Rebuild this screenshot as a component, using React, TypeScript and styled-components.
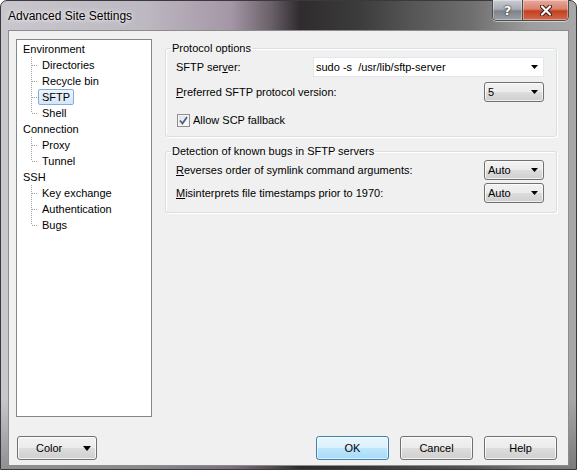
import styled, { createGlobalStyle, css } from 'styled-components';

const Global = createGlobalStyle`
  html, body {
    margin: 0;
    padding: 0;
    background: #ffffff;
  }
  body {
    font-family: "Liberation Sans", Arial, sans-serif;
    font-size: 11px;
    color: #000;
  }
`;

const Window = styled.div`
  width: 577px;
  height: 470px;
  box-sizing: border-box;
  display: flex;
  flex-direction: column;
  border: 1px solid #3a3a3a;
  border-radius: 7px 7px 0 0;
  background:
    linear-gradient(180deg, rgba(255,255,255,0) 85%, rgba(40,40,40,0.35) 100%),
    linear-gradient(90deg, #c9c6cd 0%, #bdb8c1 25%, #a496a6 40%, #6a6068 47%, #2f2c2e 52%, #3c3b3c 62%, #575757 72%, #6f6f70 82%, #9d9d9d 92%, #a8a8a8 100%);
`;

const TitleBar = styled.div`
  height: 29px;
  display: flex;
  align-items: flex-start;
  padding-left: 7px;
`;

const TitleText = styled.div`
  margin-top: 8px;
  font-size: 12px;
  line-height: 14px;
  color: #000;
  text-shadow: 0 0 6px rgba(255, 255, 255, 0.9), 0 0 3px rgba(255, 255, 255, 0.9);
`;

const CaptionGroup = styled.div`
  margin-left: auto;
  margin-right: 7px;
  margin-top: -1px;
  display: flex;
  height: 20px;
  border: 1px solid #4b4b4b;
  border-top: none;
  border-radius: 0 0 5px 5px;
  overflow: hidden;
  box-shadow: 0 1px 0 rgba(255, 255, 255, 0.5);
`;

const CaptionButton = styled.div<{ $close?: boolean }>`
  width: ${p => (p.$close ? 45 : 29)}px;
  display: flex;
  align-items: center;
  justify-content: center;
  box-shadow: inset 0 0 0 1px rgba(255, 255, 255, 0.35);
  background: ${p =>
    p.$close
      ? 'linear-gradient(180deg, #e9a99c 0%, #d9826f 45%, #c4401f 55%, #cf6a4f 100%)'
      : 'linear-gradient(180deg, #c9cdd2 0%, #a9adb3 45%, #7e838a 55%, #9ba0a6 100%)'};
  border-left: ${p => (p.$close ? '1px solid #4b4b4b' : 'none')};
`;

const HelpGlyph = styled.span`
  font-family: "DejaVu Sans", sans-serif;
  font-weight: bold;
  font-size: 13px;
  color: #fff;
  text-shadow: 0 0 1px #222, 0 0 2px #222;
`;

const Client = styled.div`
  flex: 1;
  margin: 0 7px 3px 7px;
  background: #f0f0f0;
  border: 1px solid #8c8c8c;
  display: flex;
  flex-direction: column;
  padding: 8px 11px 5px 7px;
`;

const Main = styled.div`
  display: flex;
  gap: 13px;
  height: 378px;
`;

const Tree = styled.div`
  width: 136px;
  box-sizing: border-box;
  background: #fff;
  border: 1px solid #828790;
  padding: 1px 0 0 2px;
`;

const TreeRow = styled.div`
  height: 16px;
  display: flex;
  align-items: center;
`;

const TreeChildren = styled.div`
  margin-left: 11px;
`;

const TreeLabel = styled.span<{ $selected?: boolean }>`
  padding: 0 3px;
  line-height: 14px;
  border: 1px solid transparent;
  border-radius: 2px;
  white-space: nowrap;
  ${p =>
    p.$selected &&
    css`
      border-color: #84acdd;
      background: linear-gradient(180deg, #eef5fd 0%, #d6e6f8 100%);
    `}
`;

const Panel = styled.div`
  flex: 1;
  display: flex;
  flex-direction: column;
  gap: 8px;
  padding-top: 3px;
`;

const Group = styled.fieldset<{ $bottom: number }>`
  margin: 0;
  min-width: 0;
  border: 1px solid #d5dfe5;
  border-radius: 3px;
  padding: 0 12px ${p => p.$bottom}px 5px;
  box-shadow: inset 1px 1px 0 #fff, 1px 1px 0 #fff;
`;

const Legend = styled.legend`
  padding: 0 1px;
  line-height: 13px;
`;

const Row = styled.div<{ $top: number; $h?: number }>`
  display: flex;
  align-items: center;
  height: ${p => p.$h ?? 20}px;
  margin-top: ${p => p.$top}px;
  padding-left: 5px;
`;

const Label = styled.span`
  flex: 1;
  white-space: nowrap;
`;

const EditCombo = styled.div`
  width: 231px;
  height: 20px;
  box-sizing: border-box;
  border: 1px solid #e3e7ec;
  background: #fff;
  display: flex;
  align-items: center;
  padding: 0 5px 0 2px;
`;

const Select = styled.div`
  width: 60px;
  height: 20px;
  box-sizing: border-box;
  border: 1px solid #707070;
  border-radius: 3px;
  background: linear-gradient(180deg, #f2f2f2 0%, #ebebeb 50%, #dddddd 50%, #cfcfcf 100%);
  box-shadow: inset 0 0 0 1px rgba(255, 255, 255, 0.7);
  display: flex;
  align-items: center;
  padding: 0 5px 0 3px;
`;

const Value = styled.span`
  flex: 1;
  white-space: pre;
`;

const CheckBox = styled.span`
  width: 13px;
  height: 13px;
  box-sizing: border-box;
  margin-left: 1px;
  border: 1px solid #8e8f8f;
  background: linear-gradient(135deg, #dcdcdc 0%, #f4f4f4 60%, #ffffff 100%);
  box-shadow: inset 0 0 0 1px #f4f4f4;
  display: flex;
  align-items: center;
  justify-content: center;
`;

const CheckLabel = styled.span`
  margin-left: 3px;
`;

const ButtonBar = styled.div`
  display: flex;
  align-items: center;
  gap: 11px;
  margin-top: 19px;
  height: 24px;
`;

const Button = styled.div<{ $default?: boolean; $width?: number }>`
  width: ${p => p.$width ?? 73}px;
  height: 24px;
  box-sizing: border-box;
  border: 1px solid ${p => (p.$default ? '#3c7fb1' : '#707070')};
  border-radius: 3px;
  background: ${p =>
    p.$default
      ? 'linear-gradient(180deg, #eaf6fd 0%, #d9f0fc 50%, #bee6fd 50%, #a7d9f5 100%)'
      : 'linear-gradient(180deg, #f2f2f2 0%, #ebebeb 50%, #dddddd 50%, #cfcfcf 100%)'};
  box-shadow: inset 0 0 0 1px ${p => (p.$default ? 'rgba(255,255,255,0.6)' : 'rgba(255,255,255,0.75)')};
  display: flex;
  align-items: center;
  justify-content: center;
`;

const ColorButton = styled(Button)`
  margin-left: 1px;
  margin-right: auto;
  justify-content: flex-start;
  padding: 0 5px 0 18px;
`;

const ColorArrow = styled.span`
  margin-left: auto;
  display: flex;
`;

const Arrow = ({ w = 7, h = 4 }: { w?: number; h?: number }) => (
  <svg width={w} height={h} viewBox={`0 0 ${w} ${h}`}>
    <polygon points={`0,0 ${w},0 ${w / 2},${h}`} fill="#000" />
  </svg>
);

const Connector = ({ last }: { last?: boolean }) => (
  <svg width="8" height="16" viewBox="0 0 8 16" style={{ flexShrink: 0 }}>
    <line x1="1.5" y1="0" x2="1.5" y2={last ? 8 : 16} stroke="#a0a0a0" strokeDasharray="1 1" />
    <line x1="2" y1="8.5" x2="8" y2="8.5" stroke="#a0a0a0" strokeDasharray="1 1" />
  </svg>
);

interface TreeGroup {
  title: string;
  items: string[];
}

const tree: TreeGroup[] = [
  { title: 'Environment', items: ['Directories', 'Recycle bin', 'SFTP', 'Shell'] },
  { title: 'Connection', items: ['Proxy', 'Tunnel'] },
  { title: 'SSH', items: ['Key exchange', 'Authentication', 'Bugs'] },
];

const App = (): JSX.Element => {
  return (
    <>
      <Global />
      <Window>
        <TitleBar>
          <TitleText>Advanced Site Settings</TitleText>
          <CaptionGroup>
            <CaptionButton>
              <HelpGlyph>?</HelpGlyph>
            </CaptionButton>
            <CaptionButton $close>
              <svg width="12" height="11" viewBox="0 0 12 11">
                <path d="M2 1.5 L10 9.5 M10 1.5 L2 9.5" stroke="#3a1a14" strokeWidth="4" strokeLinecap="round" />
                <path d="M2 1.5 L10 9.5 M10 1.5 L2 9.5" stroke="#fff" strokeWidth="2.2" strokeLinecap="round" />
              </svg>
            </CaptionButton>
          </CaptionGroup>
        </TitleBar>

        <Client>
          <Main>
            <Tree>
              {tree.map(group => (
                <div key={group.title}>
                  <TreeRow>
                    <TreeLabel>{group.title}</TreeLabel>
                  </TreeRow>
                  <TreeChildren>
                    {group.items.map((item, i) => (
                      <TreeRow key={item}>
                        <Connector last={i === group.items.length - 1} />
                        <TreeLabel $selected={item === 'SFTP'}>{item}</TreeLabel>
                      </TreeRow>
                    ))}
                  </TreeChildren>
                </div>
              ))}
            </Tree>

            <Panel>
              <Group $bottom={9}>
                <Legend>Protocol options</Legend>
                <Row $top={2}>
                  <Label>
                    SFTP ser<u>v</u>er:
                  </Label>
                  <EditCombo>
                    <Value>sudo -s  /usr/lib/sftp-server</Value>
                    <Arrow />
                  </EditCombo>
                </Row>
                <Row $top={5}>
                  <Label>
                    <u>P</u>referred SFTP protocol version:
                  </Label>
                  <Select>
                    <Value>5</Value>
                    <Arrow />
                  </Select>
                </Row>
                <Row $top={11} $h={14}>
                  <CheckBox>
                    <svg width="9" height="9" viewBox="0 0 9 9">
                      <path d="M1 4.5 L3.5 7.5 L8 1" fill="none" stroke="#4c5f8c" strokeWidth="1.8" />
                    </svg>
                  </CheckBox>
                  <CheckLabel>Allow SCP fallback</CheckLabel>
                </Row>
              </Group>

              <Group $bottom={9}>
                <Legend>Detection of known bugs in SFTP servers</Legend>
                <Row $top={2}>
                  <Label>
                    <u>R</u>everses order of symlink command arguments:
                  </Label>
                  <Select>
                    <Value>Auto</Value>
                    <Arrow />
                  </Select>
                </Row>
                <Row $top={3}>
                  <Label>
                    <u>M</u>isinterprets file timestamps prior to 1970:
                  </Label>
                  <Select>
                    <Value>Auto</Value>
                    <Arrow />
                  </Select>
                </Row>
              </Group>
            </Panel>
          </Main>

          <ButtonBar>
            <ColorButton $width={80}>
              Color
              <ColorArrow>
                <Arrow w={8} h={5} />
              </ColorArrow>
            </ColorButton>
            <Button $default>OK</Button>
            <Button>Cancel</Button>
            <Button>Help</Button>
          </ButtonBar>
        </Client>
      </Window>
    </>
  );
};

export default App;
